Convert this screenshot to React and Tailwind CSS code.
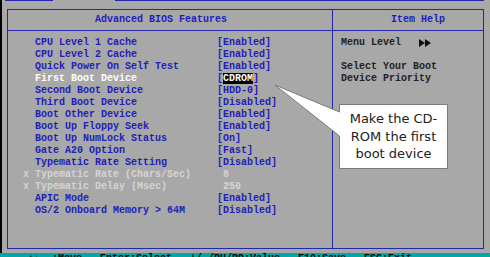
import React from 'react';

const rows = [
  { label: 'CPU Level 1 Cache', value: '[Enabled]' },
  { label: 'CPU Level 2 Cache', value: '[Enabled]' },
  { label: 'Quick Power On Self Test', value: '[Enabled]' },
  { label: 'First Boot Device', value: 'CDROM', selected: true },
  { label: 'Second Boot Device', value: '[HDD-0]' },
  { label: 'Third Boot Device', value: '[Disabled]' },
  { label: 'Boot Other Device', value: '[Enabled]' },
  { label: 'Boot Up Floppy Seek', value: '[Enabled]' },
  { label: 'Boot Up NumLock Status', value: '[On]' },
  { label: 'Gate A20 Option', value: '[Fast]' },
  { label: 'Typematic Rate Setting', value: '[Disabled]' },
  { label: 'Typematic Rate (Chars/Sec)', value: ' 6', locked: true },
  { label: 'Typematic Delay (Msec)', value: ' 250', locked: true },
  { label: 'APIC Mode', value: '[Enabled]' },
  { label: 'OS/2 Onboard Memory > 64M', value: '[Disabled]' },
];

const BiosRow = ({ row }) => {
  const color = row.selected ? 'text-white' : row.locked ? 'text-[#d4d4d4]' : 'text-[#1e1eb8]';
  return (
    <div className="flex h-[12px] leading-[12px] whitespace-pre">
      <span className="w-[12px] text-[#d4d4d4]">{row.locked ? 'x' : ''}</span>
      <span className={`w-[182px] ${color}`}>{row.label}</span>
      {row.selected ? (
        <span className="text-[#1e1eb8]">
          [<span className="bg-black text-white">{row.value}</span>]
        </span>
      ) : (
        <span className={row.locked ? 'text-[#d4d4d4]' : 'text-[#1e1eb8]'}>{row.value}</span>
      )}
    </div>
  );
};

const Callout = () => (
  <div className="absolute left-[270px] top-[80px] w-[185px] h-[95px]">
    <svg width="185" height="95" viewBox="270 80 185 95" className="absolute left-0 top-0">
      <path
        d="M339.5 104.5 H447.5 V168.5 H339.5 V136 L275 85 L339.5 112 Z"
        fill="#ffffff"
        stroke="#7a7a7a"
        strokeWidth="1"
      />
    </svg>
    <div className="absolute left-[69px] top-[24px] w-[109px] h-[65px] flex flex-col items-center justify-center text-[13px] leading-[17.5px] font-normal text-[#222222] font-['DejaVu_Sans',sans-serif]">
      <span>Make the CD-</span>
      <span>ROM the first</span>
      <span>boot device</span>
    </div>
  </div>
);

const DoubleArrow = () => (
  <svg width="12" height="8" viewBox="0 0 12 8" className="mt-[2px]">
    <path d="M0 0 L6 4 L0 8 Z M6 0 L12 4 L6 8 Z" fill="#111111" />
  </svg>
);

export default function App() {
  return (
    <div className="relative w-[490px] h-[257px] overflow-hidden bg-[#a8a8a8] font-['Liberation_Mono',monospace] font-bold text-[10px]">
      <div className="flex h-[253px]">
        <div className="w-[2px] bg-black" />
        <div className="flex-1 flex flex-col">
          <div className="flex h-[9px] items-start">
            <div className="ml-[3px] w-[48px] h-px bg-[#2626a6]" />
            <div className="ml-[62px] w-[369px] h-px bg-[#2626a6]" />
          </div>
          <div className="ml-[5px] w-[477px] h-[240px] border border-[#2626a6] flex flex-col">
            <div className="flex h-[21px] border-b border-[#2626a6]">
              <div className="w-[325px] border-r border-[#2626a6] pl-[87px] leading-[20px] text-[#1e1eb8]">
                Advanced BIOS Features
              </div>
              <div className="flex-1 pl-[58px] leading-[20px] text-[#1e1eb8]">Item Help</div>
            </div>
            <div className="flex flex-1">
              <div className="w-[325px] border-r border-[#2626a6] pt-[6px] pl-[15px]">
                {rows.map((row) => (
                  <BiosRow key={row.label} row={row} />
                ))}
              </div>
              <div className="flex-1 pt-[6px] pl-[8px] text-[#222222] leading-[12px] whitespace-pre">
                <div className="flex">
                  <span className="w-[78px]">Menu Level</span>
                  <DoubleArrow />
                </div>
                <div className="h-[12px]" />
                <div>Select Your Boot</div>
                <div>Device Priority</div>
              </div>
            </div>
          </div>
        </div>
      </div>
      <div className="h-[4px] bg-[#00a8a8] overflow-hidden">
        <div className="pl-[28px] text-black text-[10px] leading-[10px] pt-[1px] whitespace-pre">
          ↑↓→←:Move   Enter:Select   +/-/PU/PD:Value   F10:Save   ESC:Exit
        </div>
      </div>
      <Callout />
    </div>
  );
}
